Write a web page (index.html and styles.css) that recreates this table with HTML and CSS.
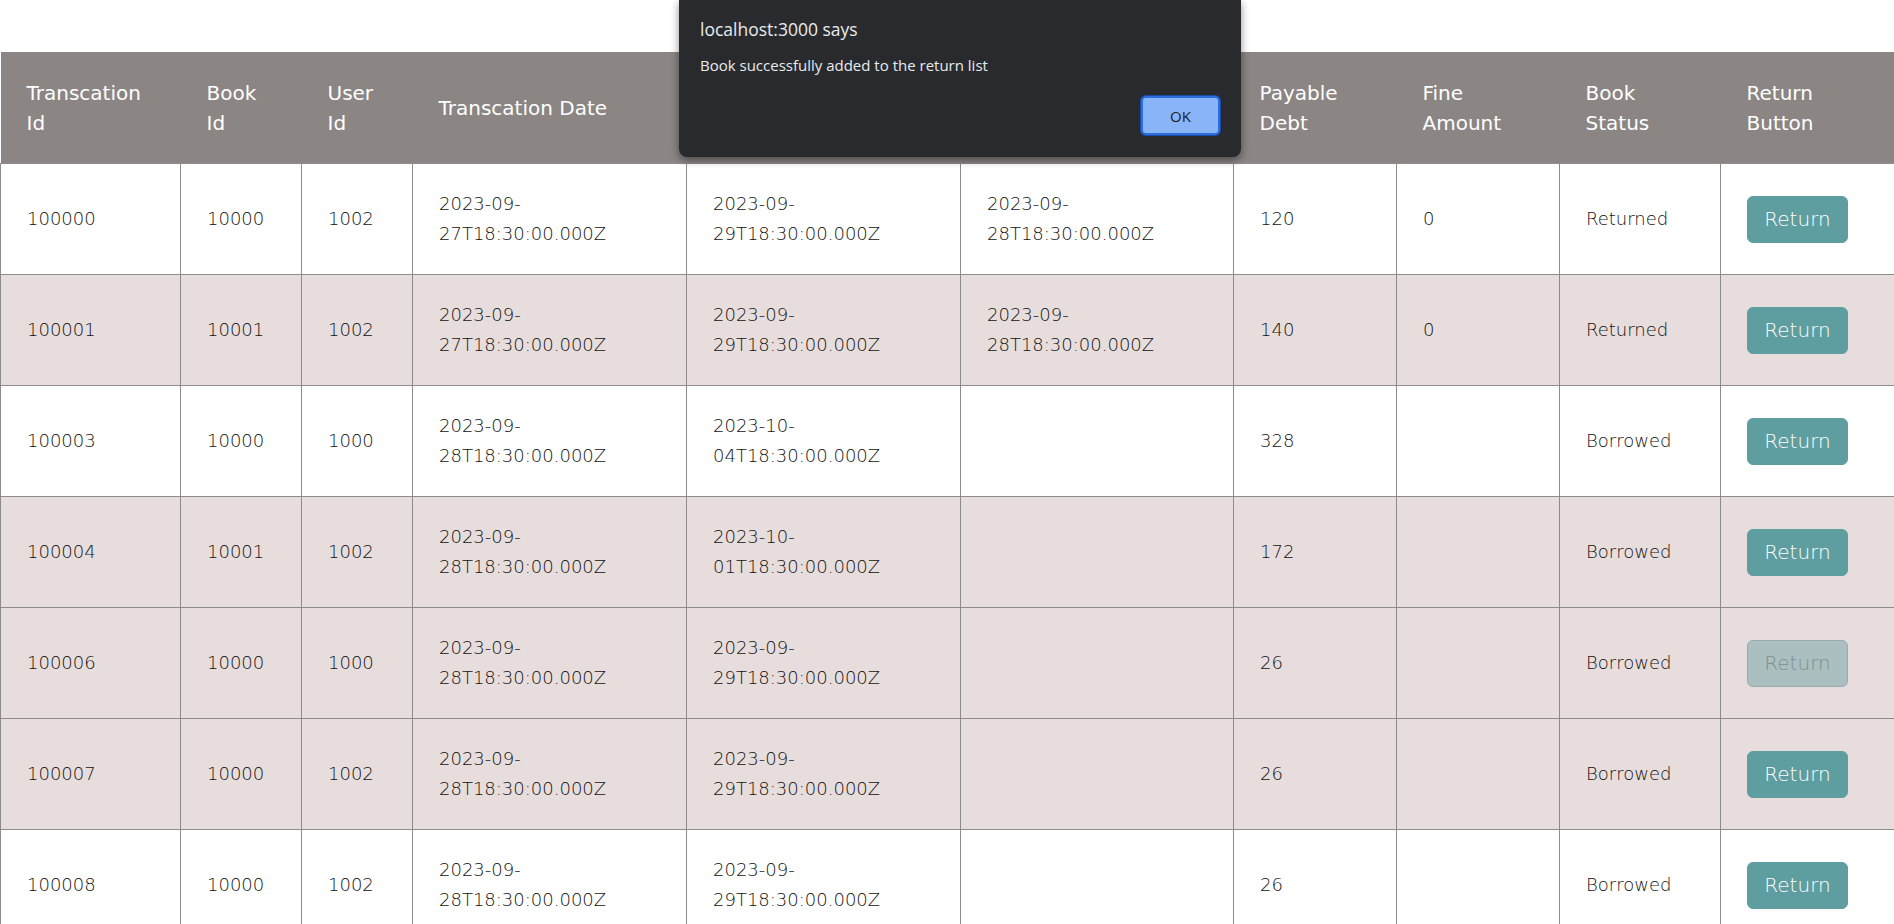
FILE: index.html
```html
<!DOCTYPE html>
<html>
<head>
<meta charset="utf-8">
<link rel="stylesheet" href="styles.css">
</head>
<body>
<div class="page">
  <table class="tx">
    <colgroup>
      <col class="w180"><col class="w121"><col class="w111"><col class="w274"><col class="w274"><col class="w273"><col class="w163"><col class="w163"><col class="w161"><col class="w174">
    </colgroup>
    <thead>
      <tr>
        <th>Transcation<br>Id</th>
        <th>Book<br>Id</th>
        <th>User<br>Id</th>
        <th>Transcation Date</th>
        <th>Due Date</th>
        <th>Return Date</th>
        <th>Payable<br>Debt</th>
        <th>Fine<br>Amount</th>
        <th>Book<br>Status</th>
        <th>Return<br>Button</th>
      </tr>
    </thead>
    <tbody>
      <tr>
        <td>100000</td><td>10000</td><td>1002</td>
        <td>2023-09-<br>27T18:30:00.000Z</td><td>2023-09-<br>29T18:30:00.000Z</td><td>2023-09-<br>28T18:30:00.000Z</td>
        <td>120</td><td>0</td><td>Returned</td><td><button class="btn">Return</button></td>
      </tr>
      <tr class="alt">
        <td>100001</td><td>10001</td><td>1002</td>
        <td>2023-09-<br>27T18:30:00.000Z</td><td>2023-09-<br>29T18:30:00.000Z</td><td>2023-09-<br>28T18:30:00.000Z</td>
        <td>140</td><td>0</td><td>Returned</td><td><button class="btn">Return</button></td>
      </tr>
      <tr>
        <td>100003</td><td>10000</td><td>1000</td>
        <td>2023-09-<br>28T18:30:00.000Z</td><td>2023-10-<br>04T18:30:00.000Z</td><td></td>
        <td>328</td><td></td><td>Borrowed</td><td><button class="btn">Return</button></td>
      </tr>
      <tr class="alt">
        <td>100004</td><td>10001</td><td>1002</td>
        <td>2023-09-<br>28T18:30:00.000Z</td><td>2023-10-<br>01T18:30:00.000Z</td><td></td>
        <td>172</td><td></td><td>Borrowed</td><td><button class="btn">Return</button></td>
      </tr>
      <tr class="alt">
        <td>100006</td><td>10000</td><td>1000</td>
        <td>2023-09-<br>28T18:30:00.000Z</td><td>2023-09-<br>29T18:30:00.000Z</td><td></td>
        <td>26</td><td></td><td>Borrowed</td><td><button class="btn btn-disabled" disabled>Return</button></td>
      </tr>
      <tr class="alt">
        <td>100007</td><td>10000</td><td>1002</td>
        <td>2023-09-<br>28T18:30:00.000Z</td><td>2023-09-<br>29T18:30:00.000Z</td><td></td>
        <td>26</td><td></td><td>Borrowed</td><td><button class="btn">Return</button></td>
      </tr>
      <tr>
        <td>100008</td><td>10000</td><td>1002</td>
        <td>2023-09-<br>28T18:30:00.000Z</td><td>2023-09-<br>29T18:30:00.000Z</td><td></td>
        <td>26</td><td></td><td>Borrowed</td><td><button class="btn">Return</button></td>
      </tr>
    </tbody>
  </table>
</div>

<div class="alert">
  <div class="alert-title">localhost:3000 says</div>
  <div class="alert-msg">Book successfully added to the return list</div>
  <div class="alert-actions"><button class="alert-ok">OK</button></div>
</div>
</body>
</html>
```

FILE: styles.css
```css
html, body {
  margin: 0;
  padding: 0;
  background: #ffffff;
  overflow: hidden;
}

.page {
  padding-top: 52px;
  font-family: "DejaVu Sans", "Liberation Sans", sans-serif;
  font-size: 18px;
  line-height: 30px;
  color: #111111;
}

.tx {
  border-collapse: collapse;
  table-layout: fixed;
  width: 1893px;
}

.w180 { width: 180px; }
.w121 { width: 121px; }
.w111 { width: 111px; }
.w274 { width: 274px; }
.w273 { width: 273px; }
.w163 { width: 163px; }
.w161 { width: 161px; }
.w174 { width: 174px; }

.tx th {
  background: #8b8584;
  color: #ffffff;
  font-size: 20px;
  font-weight: 400;
  text-align: left;
  height: 111px;
  padding: 0 0 0 26px;
  vertical-align: middle;
}

.tx td {
  height: 110px;
  padding: 0 0 0 26px;
  border: 1px solid #8f8b8b;
  vertical-align: middle;
  font-weight: 200;
}

.tx tr.alt td {
  background: #e8dddd;
}

.btn {
  width: 101px;
  height: 47px;
  border: 1px solid #5f9ea0;
  border-radius: 6px;
  background: #5f9ea0;
  color: #ffffff;
  font-family: "DejaVu Sans", sans-serif;
  font-size: 20px;
  font-weight: 200;
  padding: 0;
  cursor: pointer;
}

.btn-disabled {
  background: #abbfc0;
  border-color: #97abac;
  color: #7f9192;
}

.alert {
  position: absolute;
  left: 679px;
  top: 0;
  width: 562px;
  height: 157px;
  box-sizing: border-box;
  background: #292a2d;
  border-radius: 0 0 8px 8px;
  box-shadow: 0 3px 8px rgba(0, 0, 0, 0.45);
  padding: 18px 21px 0 21px;
  font-family: "Open Sans", "Noto Sans", sans-serif;
  color: #e8eaed;
}

.alert-title {
  font-size: 17.5px;
  line-height: 22px;
}

.alert-msg {
  font-size: 15px;
  line-height: 18px;
  margin-top: 16px;
}

.alert-actions {
  display: flex;
  justify-content: flex-end;
  margin-top: 22px;
}

.alert-ok {
  width: 79px;
  height: 39px;
  box-sizing: border-box;
  background: #8ab4f8;
  border: 2px solid #2f6fdd;
  border-radius: 5px;
  box-shadow: 0 0 0 1px #1a4aa8;
  color: #202124;
  font-family: "Open Sans", "Noto Sans", sans-serif;
  font-size: 15px;
  padding: 0;
}
```
